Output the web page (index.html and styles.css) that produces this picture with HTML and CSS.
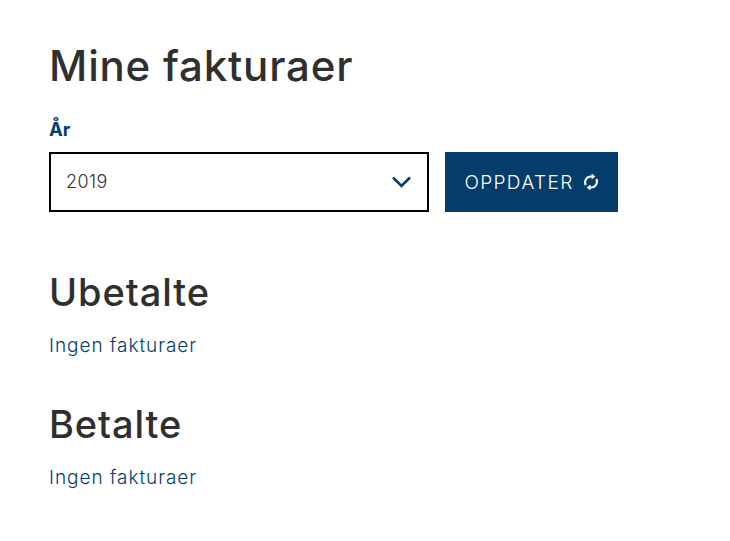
FILE: index.html
```html
<!DOCTYPE html>
<html lang="nb">

<head>
	<meta charset="UTF-8">
	<title>Mine fakturaer</title>
	<meta name="viewport" content="width=device-width">
	<link rel="stylesheet" href="styles.css">
</head>

<body>
	<main class="page">
		<h1>Mine fakturaer</h1>
		<form action="#" method="post" class="yearForm">
			<label for="year">År</label>
			<div class="formRow">
				<div class="selectBox">
					<select id="year">
						<option>2019</option>
						<option>2018</option>
					</select>
					<svg class="chevron" viewBox="0 0 20 12" width="21" height="12" aria-hidden="true">
						<path d="M1.5 1.5 10 10l8.5-8.5" />
					</svg>
				</div>
				<button type="button">
					<span>OPPDATER</span>
					<svg class="refresh" viewBox="0 0 16 18" width="16" height="18" aria-hidden="true">
						<path class="arc" d="M2.6 12A6 6 0 0 1 8 3.5h1" />
						<path class="head" d="M8.6 0.6 12.4 3.5 8.6 6.4Z" />
						<path class="arc" d="M13.4 6A6 6 0 0 1 8 14.5H7" />
						<path class="head" d="M7.4 11.6 3.6 14.5 7.4 17.4Z" />
					</svg>
				</button>
			</div>
		</form>
		<section class="invoices">
			<h2>Ubetalte</h2>
			<p>Ingen fakturaer</p>
		</section>
		<section class="invoices">
			<h2>Betalte</h2>
			<p>Ingen fakturaer</p>
		</section>
	</main>
</body>

</html>
```

FILE: styles.css
```css
body {
	margin: 0;
	background: #fff;
	color: #333;
	font-family: Inter, "Liberation Sans", sans-serif;
}

.page {
	padding: 41px 49px 0;
}

h1 {
	margin: 0 0 26px;
	font-size: 42px;
	line-height: 50px;
	font-weight: 500;
	letter-spacing: 0.8px;
	color: #2f2f2f;
}

h2 {
	margin: 0;
	font-size: 38px;
	line-height: 42px;
	font-weight: 550;
	letter-spacing: 0.9px;
	color: #2f2f2f;
}

label {
	display: block;
	height: 24px;
	margin-bottom: 11px;
	font-size: 18.5px;
	line-height: 24px;
	font-weight: 700;
	color: #043d6b;
}

.formRow {
	display: flex;
	gap: 16px;
}

.selectBox {
	position: relative;
	width: 380px;
	height: 60px;
}

.selectBox select {
	appearance: none;
	width: 100%;
	height: 100%;
	padding: 0 15px 2px;
	border: 2px solid #000;
	border-radius: 0;
	background: #fff;
	color: #333;
	font-family: inherit;
	font-size: 18px;
	font-weight: 300;
	letter-spacing: 0.4px;
}

.chevron {
	position: absolute;
	top: 24px;
	right: 17px;
	fill: none;
	stroke: #043d6b;
	stroke-width: 2.6;
}

button {
	display: flex;
	align-items: center;
	justify-content: center;
	gap: 9px;
	width: 173px;
	height: 60px;
	padding: 0;
	border: 0;
	background: #043d6b;
	color: #fff;
	font-family: inherit;
	font-size: 19px;
	font-weight: 300;
	letter-spacing: 1.4px;
}

.refresh .arc {
	fill: none;
	stroke: #fff;
	stroke-width: 2.1;
}

.refresh .head {
	fill: #fff;
}

.invoices {
	margin-top: 59px;
}

.invoices + .invoices {
	margin-top: 45px;
}

.invoices p {
	margin: 21px 0 0;
	font-size: 19px;
	line-height: 24px;
	font-weight: 300;
	letter-spacing: 0.95px;
	color: #043d6b;
}
```
